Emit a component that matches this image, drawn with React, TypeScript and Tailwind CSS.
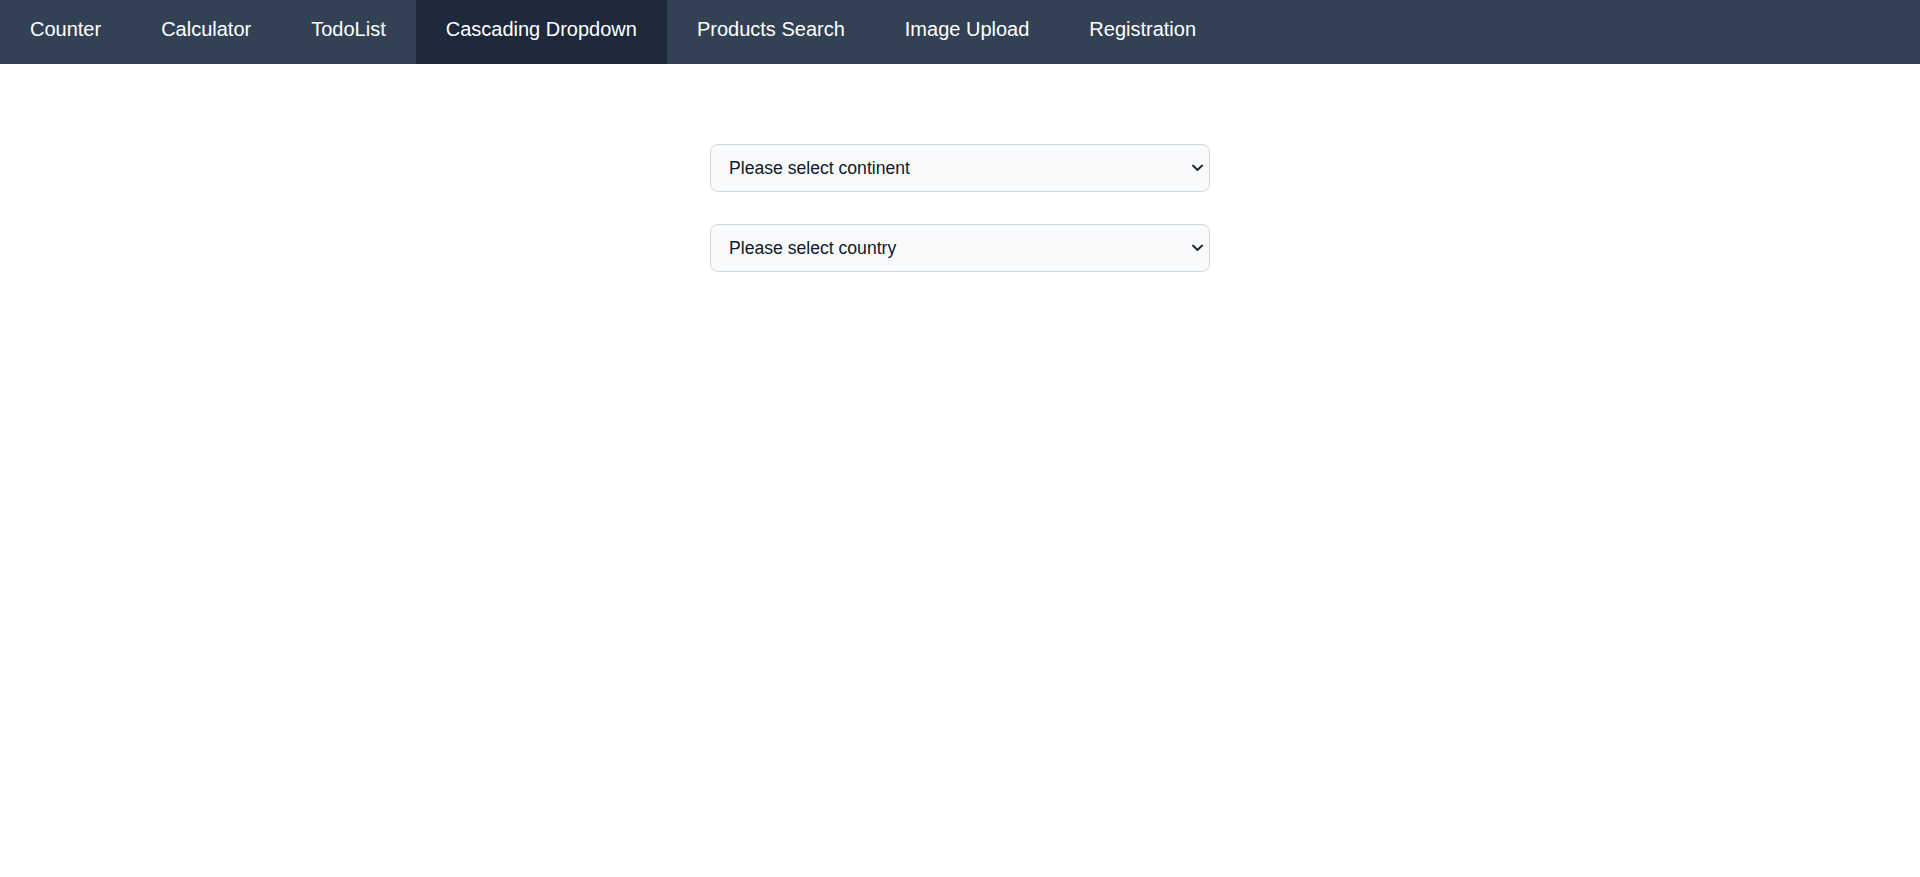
import React, { useState } from "react";

const tabs = [
  "Counter",
  "Calculator",
  "TodoList",
  "Cascading Dropdown",
  "Products Search",
  "Image Upload",
  "Registration",
];

function Chevron() {
  return (
    <svg
      className="pointer-events-none absolute right-[7px] top-1/2 -translate-y-1/2"
      width="11"
      height="7"
      viewBox="0 0 11 7"
      fill="none"
    >
      <path d="M1 1l4.5 4.5L10 1" stroke="#1f2937" strokeWidth="2" strokeLinecap="round" strokeLinejoin="round" />
    </svg>
  );
}

export default function App() {
  const [active, setActive] = useState("Cascading Dropdown");
  const [continent, setContinent] = useState("");
  const [country, setCountry] = useState("");
  return (
    <div className="min-h-screen bg-white font-['Liberation_Sans',Arial,sans-serif]">
      <nav className="flex h-16 bg-[#334155]">
        {tabs.map((t) => (
          <button
            key={t}
            onClick={() => setActive(t)}
            className={`flex h-16 items-start px-[30px] pt-[18px] text-[20px] leading-[23px] text-white ${
              active === t ? "bg-[#1e293b]" : ""
            }`}
          >
            {t}
          </button>
        ))}
      </nav>
      <main className="mx-auto mt-20 flex w-[500px] flex-col gap-8">
        <div className="relative">
          <select
            value={continent}
            onChange={(e) => setContinent(e.target.value)}
            className="h-12 w-full appearance-none rounded-lg border border-[#d1d5db] bg-[#f9fafb] pl-[18px] pr-8 text-[17.6px] text-[#111827] outline-none"
          >
            <option value="">Please select continent</option>
            <option value="asia">Asia</option>
            <option value="europe">Europe</option>
          </select>
          <Chevron />
        </div>
        <div className="relative">
          <select
            value={country}
            onChange={(e) => setCountry(e.target.value)}
            className="h-12 w-full appearance-none rounded-lg border border-[#d1d5db] bg-[#f9fafb] pl-[18px] pr-8 text-[17.6px] text-[#111827] outline-none"
          >
            <option value="">Please select country</option>
          </select>
          <Chevron />
        </div>
      </main>
    </div>
  );
}
